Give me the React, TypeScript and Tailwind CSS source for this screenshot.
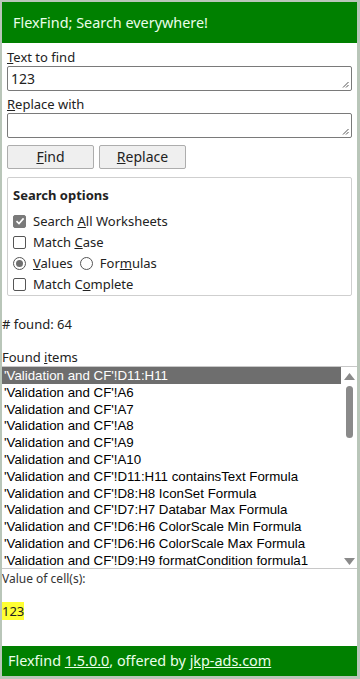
import React from "react";

const items = [
  "'Validation and CF'!D11:H11",
  "'Validation and CF'!A6",
  "'Validation and CF'!A7",
  "'Validation and CF'!A8",
  "'Validation and CF'!A9",
  "'Validation and CF'!A10",
  "'Validation and CF'!D11:H11 containsText Formula",
  "'Validation and CF'!D8:H8 IconSet Formula",
  "'Validation and CF'!D7:H7 Databar Max Formula",
  "'Validation and CF'!D6:H6 ColorScale Min Formula",
  "'Validation and CF'!D6:H6 ColorScale Max Formula",
  "'Validation and CF'!D9:H9 formatCondition formula1",
];

const ui = { fontFamily: '"Noto Sans", "Open Sans", sans-serif' };
const arial = { fontFamily: '"Liberation Sans", Arial, sans-serif' };

function Check({ checked }: { checked?: boolean }) {
  return (
    <span
      className={
        "flex h-[13px] w-[13px] shrink-0 items-center justify-center rounded-[2px] border " +
        (checked ? "border-[#7a7a7a] bg-[#7a7a7a]" : "border-[#555] bg-white")
      }
    >
      {checked && (
        <svg width="10" height="10" viewBox="0 0 10 10">
          <path d="M1.5 5.2 L4 7.6 L8.6 2.4" fill="none" stroke="white" strokeWidth="1.6" />
        </svg>
      )}
    </span>
  );
}

function Radio({ checked }: { checked?: boolean }) {
  return (
    <span className="flex h-[13px] w-[13px] shrink-0 items-center justify-center rounded-full border border-[#555] bg-white">
      {checked && <span className="h-[7px] w-[7px] rounded-full bg-[#6f6f6f]" />}
    </span>
  );
}

function Grip() {
  return (
    <svg className="absolute bottom-[2px] right-[2px]" width="7" height="7" viewBox="0 0 7 7">
      <path d="M6.5 1 L1 6.5 M6.5 4 L4 6.5" stroke="#555" strokeWidth="1" />
    </svg>
  );
}

export default function App() {
  return (
    <div
      className="flex h-[679px] w-[360px] flex-col overflow-hidden border-t-2 border-b-[3px] border-l-2 border-r-[3px] border-[#b9c6b9] bg-white text-[#222]"
      style={ui}
    >
      <header className="flex h-[41px] shrink-0 items-center bg-[#008000] pl-[11px] text-[14.4px] text-[#eaffea]">
        FlexFind; Search everywhere!
      </header>

      <main className="flex flex-1 flex-col">
        <div className="px-[5px] pt-[6px]">
          <label className="block text-[13px] leading-[16px]">
            <span className="underline">T</span>ext to find
          </label>
          <div className="relative mt-[1px] h-[25px] rounded-[2px] border border-[#7a7a7a] bg-white px-[3px] text-[14px] leading-[23px]">
            123
            <Grip />
          </div>

          <label className="mt-[5px] block text-[13px] leading-[16px]">
            <span className="underline">R</span>eplace with
          </label>
          <div className="relative mt-[1px] h-[25px] rounded-[2px] border border-[#7a7a7a] bg-white">
            <Grip />
          </div>

          <div className="mt-[7px] flex gap-[5px]">
            <button className="h-[24px] w-[87px] rounded-[2px] border border-[#adadad] bg-[#efefef] text-[14px] leading-[20px]">
              <span className="underline">F</span>ind
            </button>
            <button className="h-[24px] w-[87px] rounded-[2px] border border-[#adadad] bg-[#efefef] text-[14px] leading-[20px]">
              <span className="underline">R</span>eplace
            </button>
          </div>

          <fieldset className="mt-[8px] h-[119px] rounded-[2px] border border-[#cfcfcf] px-[5px] pt-[8px] text-[13px]">
            <div className="text-[13px] font-bold leading-[18px]">Search options</div>
            <div className="mt-[8px] flex flex-col gap-[3px] leading-[18px]">
              <div className="flex items-center gap-[7px]">
                <Check checked />
                <span>
                  Search <span className="underline">A</span>ll Worksheets
                </span>
              </div>
              <div className="flex items-center gap-[7px]">
                <Check />
                <span>
                  Match <span className="underline">C</span>ase
                </span>
              </div>
              <div className="flex items-center gap-[7px]">
                <Radio checked />
                <span>
                  <span className="underline">V</span>alues
                </span>
                <Radio />
                <span>
                  For<span className="underline">m</span>ulas
                </span>
              </div>
              <div className="flex items-center gap-[7px]">
                <Check />
                <span>
                  Match C<span className="underline">o</span>mplete
                </span>
              </div>
            </div>
          </fieldset>
        </div>

        <div className="mt-[20px] text-[13px] leading-[16px]">
          # found: 64
        </div>

        <div className="mt-[17px] text-[13px] leading-[16px]">
          Found <span className="underline">i</span>tems
        </div>

        <div className="mt-[1px] flex h-[203px] border-y border-[#c8c8c8]">
          <ul className="flex-1 overflow-hidden text-[13.3px] text-black" style={arial}>
            {items.map((it, i) => (
              <li
                key={i}
                className={
                  "h-[16.8px] whitespace-nowrap pl-[2px] leading-[17px] " +
                  (i === 0 ? "bg-[#6e6e6e] text-white" : "")
                }
              >
                {it}
              </li>
            ))}
          </ul>
          <div className="flex w-[16px] flex-col items-center bg-white">
            <svg className="mt-[6px]" width="11" height="7" viewBox="0 0 11 7">
              <path d="M5.5 0 L11 7 L0 7 Z" fill="#8a8a8a" />
            </svg>
            <div className="mt-[6px] h-[52px] w-[7px] rounded-full bg-[#8a8a8a]" />
            <div className="flex-1" />
            <svg className="mb-[3px]" width="11" height="7" viewBox="0 0 11 7">
              <path d="M0 0 L11 0 L5.5 7 Z" fill="#8a8a8a" />
            </svg>
          </div>
        </div>

        <div className="mt-[2px] text-[12px] leading-[16px] text-[#333]">
          Value of cell(s):
        </div>
        <div className="mt-[11px]">
          <span className="bg-[#ffff33] text-[13px] leading-[16px]">123</span>
        </div>
      </main>

      <footer className="flex h-[30px] shrink-0 items-center bg-[#008000] pl-[6px] text-[14.4px] text-[#eaffea]">
        Flexfind&nbsp;<span className="underline">1.5.0.0</span>, offered by&nbsp;
        <span className="underline">jkp-ads.com</span>
      </footer>
    </div>
  );
}
